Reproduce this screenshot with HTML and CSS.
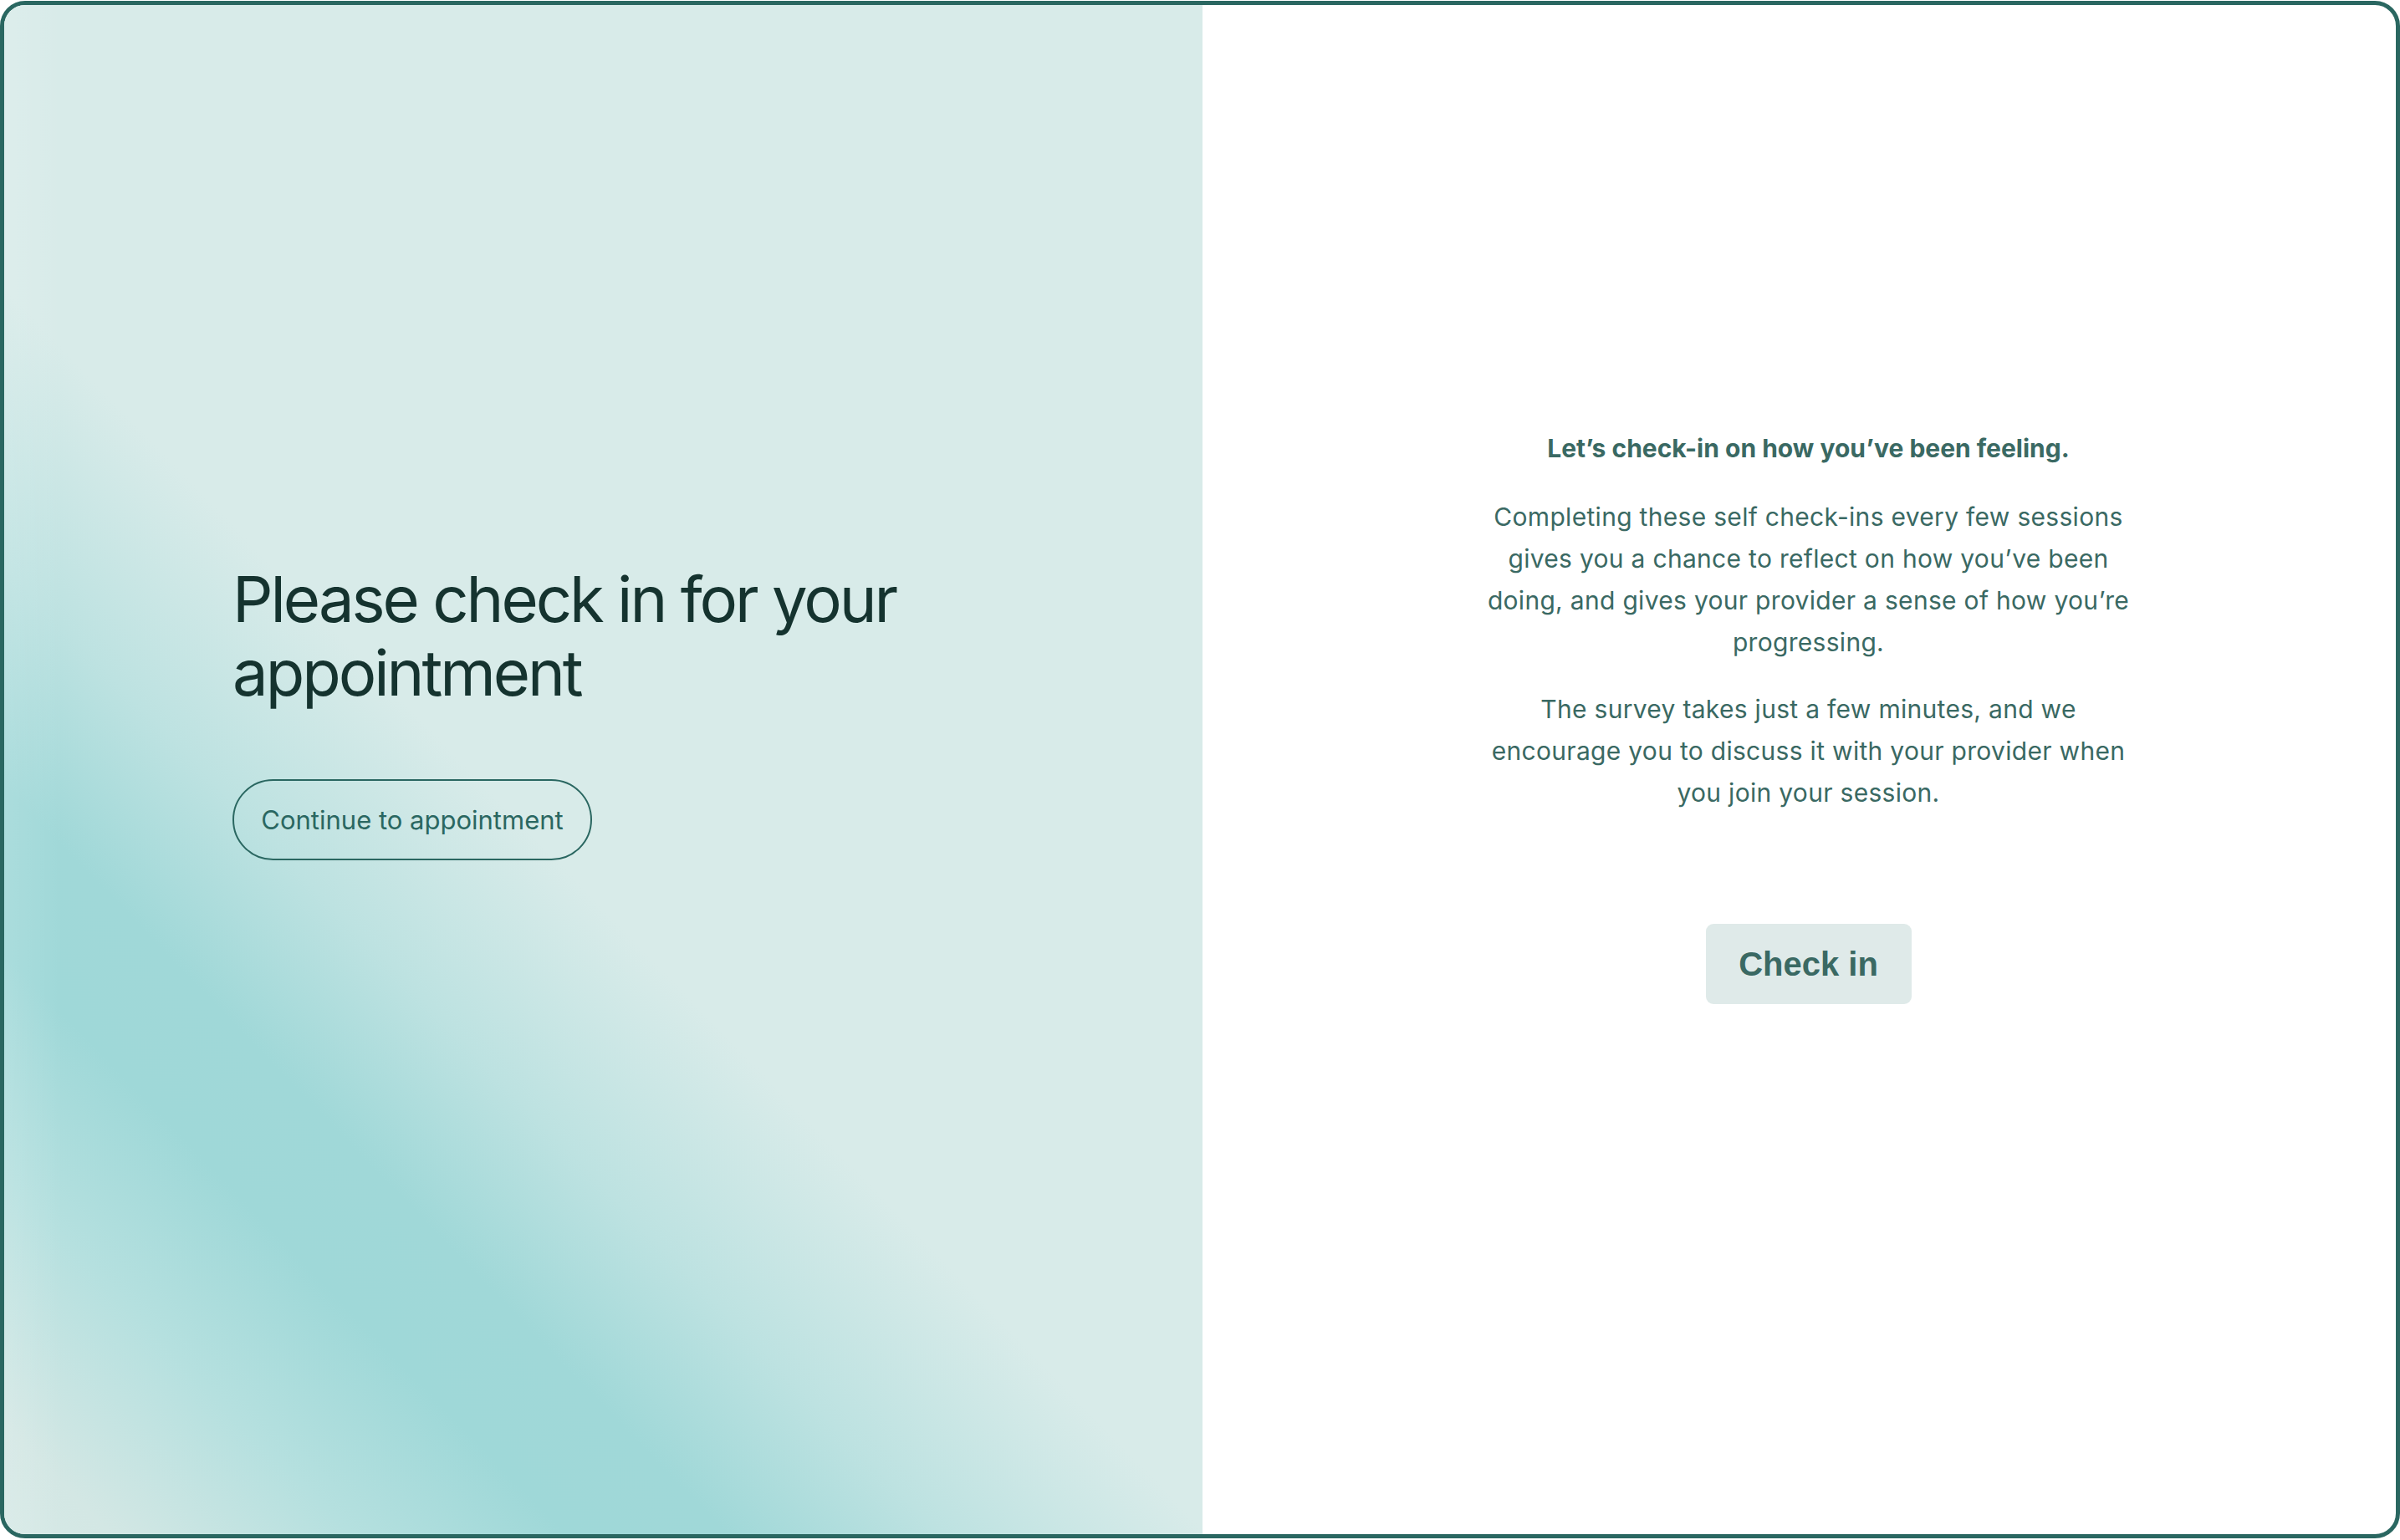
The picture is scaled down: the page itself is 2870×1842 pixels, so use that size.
FILE: index.html
```html
<!DOCTYPE html>
<html lang="en">
<head>
<meta charset="utf-8">
<title>Check in</title>
<link rel="stylesheet" href="styles.css">
</head>
<body>
<div class="frame">
  <section class="left">
    <h1 class="title">Please check in for your appointment</h1>
    <a class="pill" href="#">Continue to appointment</a>
  </section>
  <section class="right">
    <div class="copy">
      <p class="lead">Let’s check-in on how you’ve been feeling.</p>
      <p class="para">Completing these self check-ins every few sessions gives you a chance to reflect on how you’ve been doing, and gives your provider a sense of how you’re progressing.</p>
      <p class="para last">The survey takes just a few minutes, and we encourage you to discuss it with your provider when you join your session.</p>
      <button class="checkin" type="button">Check in</button>
    </div>
  </section>
</div>
</body>
</html>
```
FILE: styles.css
```css
html, body {
  margin: 0;
  padding: 0;
  background: #ffffff;
}

.frame {
  box-sizing: border-box;
  width: 2870px;
  height: 1839px;
  margin-top: 1px;
  border: 5px solid #2a6761;
  border-radius: 30px;
  overflow: hidden;
  display: grid;
  grid-template-columns: 1433px 1fr;
  background: #ffffff;
}

.left {
  box-sizing: border-box;
  padding: 666px 0 0 273px;
  background:
    linear-gradient(90deg, rgba(255, 255, 255, 0.12) 0px, rgba(255, 255, 255, 0) 70px),
    linear-gradient(46deg,
      #d6e9e6 0%,
      #d3e7e4 4%,
      #b5e0df 13%,
      #9fd8d8 21%,
      #a0d8d8 27%,
      #bde2e1 35%,
      #d8ebe9 45%,
      #d8ebe9 100%);
}

.title {
  margin: 0;
  max-width: 900px;
  font-family: Inter, "Noto Sans", sans-serif;
  font-weight: 400;
  font-size: 76px;
  line-height: 88px;
  letter-spacing: -0.04em;
  color: #15332f;
}

.pill {
  box-sizing: border-box;
  display: inline-flex;
  align-items: center;
  justify-content: center;
  margin-top: 84px;
  height: 97px;
  width: 430px;
  border: 2px solid #2a6761;
  border-radius: 999px;
  font-family: Inter, "Noto Sans", sans-serif;
  font-weight: 400;
  font-size: 31px;
  letter-spacing: 0;
  color: #2a6761;
  text-decoration: none;
}

.right {
  box-sizing: border-box;
  padding: 505px 0 0 22px;
  display: flex;
  flex-direction: column;
  align-items: center;
}

.copy {
  width: 768px;
  display: flex;
  flex-direction: column;
  align-items: center;
  text-align: center;
  color: #3a6963;
  font-family: Inter, "Noto Sans", sans-serif;
  font-size: 30px;
  line-height: 50px;
  letter-spacing: 0.01em;
}

.copy p {
  margin: 0;
}

.lead {
  font-weight: 700;
  font-size: 30px;
  letter-spacing: 0;
  margin-bottom: 32px !important;
}

.para {
  margin-bottom: 30px !important;
}

.para.last {
  margin-bottom: 0 !important;
}

.checkin {
  margin-top: 132px;
  width: 246px;
  height: 96px;
  border: none;
  border-radius: 9px;
  background: #dfeae9;
  color: #3a6963;
  font-family: "Liberation Sans", Arial, sans-serif;
  font-weight: 700;
  font-size: 40px;
  letter-spacing: 0;
  padding: 0;
}
```
